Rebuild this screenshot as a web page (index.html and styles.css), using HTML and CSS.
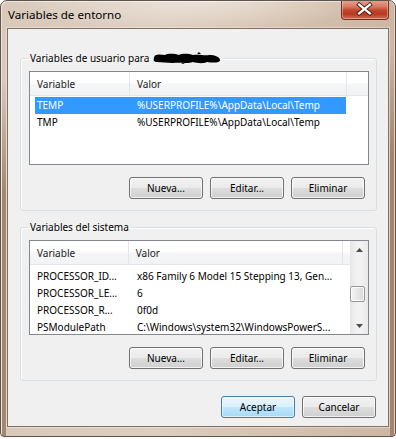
FILE: index.html
```html
<!DOCTYPE html>
<html lang="es">
<head>
<meta charset="utf-8">
<title>Variables de entorno</title>
<link rel="stylesheet" href="styles.css">
</head>
<body>
<div class="window">
  <div class="titlebar">
    <span class="title">Variables de entorno</span>
    <div class="close">
      <svg width="48" height="20" viewBox="0 0 48 20">
        <path d="M18.5 5.5 L29.5 14.5 M29.5 5.5 L18.5 14.5" stroke="#4a1e16" stroke-width="4.2" stroke-linecap="square" fill="none"/>
        <path d="M18.5 5.5 L29.5 14.5 M29.5 5.5 L18.5 14.5" stroke="#ffffff" stroke-width="2.4" stroke-linecap="square" fill="none"/>
      </svg>
    </div>
  </div>
  <div class="client">
    <fieldset class="group">
      <legend>Variables de usuario para <svg class="redact" width="68" height="12" viewBox="0 0 68 12"><path d="M1 6 C1 2 6 2 12 3 C16 1 22 2 26 3 C30 1 36 2 40 3 C46 2 52 4 56 3 C62 3 67 5 67 8 C67 11 60 11 54 10 C50 12 44 11 40 10 C34 12 26 10 20 11 C14 11 8 10 4 10 C1 10 0 8 1 6Z" fill="#000"/><path d="M44 2 L46 0 L48 2Z M28 11 L30 12 L32 11Z" fill="#000"/></svg></legend>
      <div class="list">
        <div class="hdr">
          <div class="hc c1">Variable</div>
          <div class="hc c2">Valor</div>
          <div class="hc rest"></div>
        </div>
        <div class="rows">
          <div class="row sel"><span class="rc1">TEMP</span><span class="rc2">%USERPROFILE%\AppData\Local\Temp</span></div>
          <div class="row"><span class="rc1">TMP</span><span class="rc2">%USERPROFILE%\AppData\Local\Temp</span></div>
        </div>
      </div>
      <div class="btns">
        <button class="btn">Nueva...</button>
        <button class="btn">Editar...</button>
        <button class="btn">Eliminar</button>
      </div>
    </fieldset>

    <fieldset class="group g2">
      <legend>Variables del sistema</legend>
      <div class="list list2">
        <div class="lmain">
          <div class="hdr">
            <div class="hc c1">Variable</div>
            <div class="hc c2">Valor</div>
            <div class="hc rest"></div>
          </div>
          <div class="rows rows2">
            <div class="row"><span class="rc1">PROCESSOR_ID...</span><span class="rc2">x86 Family 6 Model 15 Stepping 13, Gen...</span></div>
            <div class="row"><span class="rc1">PROCESSOR_LE...</span><span class="rc2">6</span></div>
            <div class="row"><span class="rc1">PROCESSOR_R...</span><span class="rc2">0f0d</span></div>
            <div class="row"><span class="rc1">PSModulePath</span><span class="rc2">C:\Windows\system32\WindowsPowerS...</span></div>
          </div>
        </div>
        <div class="sbar">
          <div class="arrow"><svg width="7" height="4" viewBox="0 0 7 4"><path d="M0 4 L3.5 0 L7 4Z" fill="#4d4d4d"/></svg></div>
          <div class="track"><div class="thumb"></div></div>
          <div class="arrow"><svg width="7" height="4" viewBox="0 0 7 4"><path d="M0 0 L3.5 4 L7 0Z" fill="#4d4d4d"/></svg></div>
        </div>
      </div>
      <div class="btns">
        <button class="btn">Nueva...</button>
        <button class="btn">Editar...</button>
        <button class="btn">Eliminar</button>
      </div>
    </fieldset>

    <div class="dlgbtns">
      <button class="btn default">Aceptar</button>
      <button class="btn">Cancelar</button>
    </div>
  </div>
</div>
</body>
</html>
```
FILE: styles.css
```css
html, body {
  margin: 0;
  padding: 0;
  background: #ffffff;
}
body {
  font-family: "Noto Sans", "Open Sans", sans-serif;
  font-size: 10px;
  color: #000;
}
.window {
  width: 396px;
  height: 437px;
  box-sizing: border-box;
  border: 1px solid #5f544b;
  border-radius: 7px 7px 4px 4px;
  display: flex;
  flex-direction: column;
  overflow: hidden;
  background:
    linear-gradient(to bottom, rgba(130,92,62,0) 80px, rgba(130,92,62,0.6) 190px) left 1px top 0 / 4px 100% no-repeat,
    linear-gradient(to bottom, rgba(130,92,62,0) 50px, rgba(130,92,62,0.55) 150px) right 1px top 0 / 4px 100% no-repeat,
    radial-gradient(ellipse 180px 30px at 190px 0, #ece2d8 0, rgba(236,226,216,0) 100%),
    linear-gradient(to right, #d8c9bb 0, #dccdbf 40%, #d4c0ae 75%, #cdb6a2 100%);
  box-shadow: inset 1px 1px 0 rgba(255,255,255,0.55), inset -1px 0 0 rgba(255,255,255,0.4);
}
.titlebar {
  height: 27px;
  flex: none;
  display: flex;
  align-items: flex-start;
  justify-content: space-between;
}
.title {
  margin: 6px 0 0 7px;
  font-size: 11.6px;
  line-height: 16px;
  color: #000;
}
.close {
  width: 48px;
  height: 20px;
  margin: -1px 6px 0 0;
  box-sizing: border-box;
  border: 1px solid #6b3328;
  border-top: none;
  border-radius: 0 0 4px 4px;
  background: linear-gradient(to bottom, #e6a695 0, #d77a63 35%, #c2432a 55%, #b83a22 75%, #d36f57 100%);
  box-shadow: inset 0 0 0 1px rgba(255,210,200,0.45);
  display: flex;
}
.close svg {
  display: block;
  margin: -1px 0 0 -1px;
}
.client {
  margin: 0 6px;
  height: 399px;
  flex: none;
  box-sizing: border-box;
  border: 1px solid #7f7166;
  background: #f0f0f0;
  padding: 22px 11px 0 12px;
  display: flex;
  flex-direction: column;
  box-shadow: 0 0 0 1px rgba(255,255,255,0.35);
}
.group {
  margin: 0;
  min-width: 0;
  padding: 5px 7px 11px 8px;
  border: 1px solid #d5dfe5;
  border-radius: 3px;
  box-shadow: inset 1px 1px 0 #fff;
}
.group.g2 {
  margin-top: 9px;
}
.group legend {
  padding: 0 2px;
  margin-left: -1px;
  line-height: 15px;
  white-space: nowrap;
}
.redact {
  vertical-align: -2px;
  margin-left: 1px;
}
.list {
  height: 94px;
  box-sizing: border-box;
  border: 1px solid #828790;
  background: #fff;
  overflow: hidden;
}
.list2 {
  height: 95px;
  display: flex;
}
.lmain {
  flex: 1;
  min-width: 0;
  overflow: hidden;
}
.hdr {
  height: 24px;
  display: flex;
  box-sizing: border-box;
  border-bottom: 1px solid #e3e6ea;
  background: linear-gradient(to bottom, #ffffff 0, #ffffff 45%, #f4f5f7 55%, #f2f3f5 100%);
}
.hc {
  box-sizing: border-box;
  line-height: 24px;
  padding-left: 7px;
  border-right: 1px solid #e3e5e8;
  white-space: nowrap;
  color: #1a1a1a;
}
.hc.c1 { width: 100px; }
.hc.c2 { width: 217px; }
.hc.rest { flex: 1; border-right: none; }
.rows {
  padding-top: 1px;
}
.rows2 {
  padding-top: 3px;
}
.row {
  display: flex;
  width: 311px;
  height: 17px;
  line-height: 17px;
  margin-left: 5px;
  white-space: nowrap;
}
.row.sel {
  background: #3399ff;
  color: #fff;
}
.rc1 {
  width: 95px;
  padding-left: 2px;
  box-sizing: border-box;
  flex: none;
  overflow: hidden;
}
.rc2 {
  width: 216px;
  padding-left: 7px;
  box-sizing: border-box;
  flex: none;
  overflow: hidden;
}
.sbar {
  width: 18px;
  flex: none;
  display: flex;
  flex-direction: column;
  background: linear-gradient(to right, #e6e6e6 0, #f2f2f2 40%, #f2f2f2 60%, #e9e9e9 100%);
}
.arrow {
  height: 17px;
  flex: none;
  display: flex;
  align-items: center;
  justify-content: center;
}
.arrow svg { display: block; }
.track {
  flex: 1;
}
.thumb {
  margin: 28px 0 0 0;
  width: 15px;
  height: 16px;
  box-sizing: border-box;
  border: 1px solid #979797;
  border-radius: 2px;
  background: linear-gradient(to right, #f6f6f6 0, #e6e6e6 50%, #d8d8d8 100%);
  box-shadow: inset 0 0 0 1px rgba(255,255,255,0.8);
}
.btns {
  display: flex;
  justify-content: flex-end;
  gap: 7px;
  margin-top: 12px;
  padding-right: 4px;
}
.btn {
  width: 74px;
  height: 22px;
  padding: 0;
  margin: 0;
  box-sizing: border-box;
  border: 1px solid #707070;
  border-radius: 3px;
  background: linear-gradient(to bottom, #f2f2f2 0, #ebebeb 48%, #dddddd 52%, #cfcfcf 100%);
  box-shadow: inset 0 0 0 1px rgba(255,255,255,0.75);
  font-family: "Noto Sans", "Open Sans", sans-serif;
  font-size: 10px;
  line-height: 20px;
  color: #000;
  text-align: center;
}
.btn.default {
  border-color: #3c7fb1;
  background: linear-gradient(to bottom, #eaf6fd 0, #d9f0fc 48%, #bee6fd 52%, #a7d9f5 100%);
  box-shadow: inset 0 0 0 1px rgba(255,255,255,0.6);
}
.dlgbtns {
  display: flex;
  justify-content: flex-end;
  gap: 7px;
  margin-top: 15px;
  padding-right: 1px;
}
```
